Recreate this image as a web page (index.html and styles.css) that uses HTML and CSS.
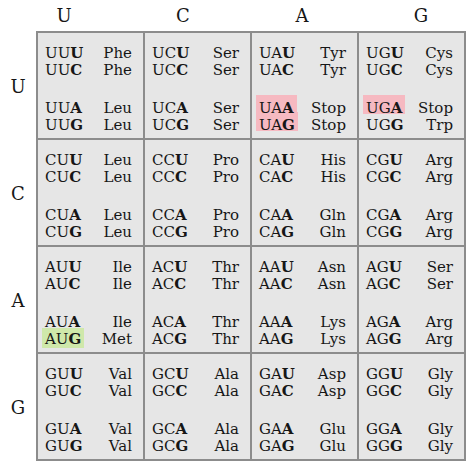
FILE: index.html
```html
<!DOCTYPE html>
<html lang="en">

<head>
    <meta charset="UTF-8">
    <meta name="viewport" content="width=device-width, initial-scale=1.0">
    <title>Codon table</title>
    <link rel="stylesheet" href="styles.css">
</head>

<body>
    <div class="head">
        <div class="head__base">U</div>
        <div class="head__base">C</div>
        <div class="head__base">A</div>
        <div class="head__base">G</div>
    </div>
    <div class="main">
        <div class="labels">
            <div class="labels__base">U</div>
            <div class="labels__base">C</div>
            <div class="labels__base">A</div>
            <div class="labels__base">G</div>
        </div>
        <div class="codons">
            <!-- U row -->
            <div class="cell">
                <div class="pair">
                    <div class="line"><span class="codon">UU<b>U</b></span><span>Phe</span></div>
                    <div class="line"><span class="codon">UU<b>C</b></span><span>Phe</span></div>
                </div>
                <div class="pair">
                    <div class="line"><span class="codon">UU<b>A</b></span><span>Leu</span></div>
                    <div class="line"><span class="codon">UU<b>G</b></span><span>Leu</span></div>
                </div>
            </div>
            <div class="cell">
                <div class="pair">
                    <div class="line"><span class="codon">UC<b>U</b></span><span>Ser</span></div>
                    <div class="line"><span class="codon">UC<b>C</b></span><span>Ser</span></div>
                </div>
                <div class="pair">
                    <div class="line"><span class="codon">UC<b>A</b></span><span>Ser</span></div>
                    <div class="line"><span class="codon">UC<b>G</b></span><span>Ser</span></div>
                </div>
            </div>
            <div class="cell">
                <div class="pair">
                    <div class="line"><span class="codon">UA<b>U</b></span><span>Tyr</span></div>
                    <div class="line"><span class="codon">UA<b>C</b></span><span>Tyr</span></div>
                </div>
                <div class="pair">
                    <div class="line"><span class="codon codon--stop">UA<b>A</b></span><span>Stop</span></div>
                    <div class="line"><span class="codon codon--stop">UA<b>G</b></span><span>Stop</span></div>
                </div>
            </div>
            <div class="cell">
                <div class="pair">
                    <div class="line"><span class="codon">UG<b>U</b></span><span>Cys</span></div>
                    <div class="line"><span class="codon">UG<b>C</b></span><span>Cys</span></div>
                </div>
                <div class="pair">
                    <div class="line"><span class="codon codon--stop">UG<b>A</b></span><span>Stop</span></div>
                    <div class="line"><span class="codon">UG<b>G</b></span><span>Trp</span></div>
                </div>
            </div>

            <!-- C row -->
            <div class="cell">
                <div class="pair">
                    <div class="line"><span class="codon">CU<b>U</b></span><span>Leu</span></div>
                    <div class="line"><span class="codon">CU<b>C</b></span><span>Leu</span></div>
                </div>
                <div class="pair">
                    <div class="line"><span class="codon">CU<b>A</b></span><span>Leu</span></div>
                    <div class="line"><span class="codon">CU<b>G</b></span><span>Leu</span></div>
                </div>
            </div>
            <div class="cell">
                <div class="pair">
                    <div class="line"><span class="codon">CC<b>U</b></span><span>Pro</span></div>
                    <div class="line"><span class="codon">CC<b>C</b></span><span>Pro</span></div>
                </div>
                <div class="pair">
                    <div class="line"><span class="codon">CC<b>A</b></span><span>Pro</span></div>
                    <div class="line"><span class="codon">CC<b>G</b></span><span>Pro</span></div>
                </div>
            </div>
            <div class="cell">
                <div class="pair">
                    <div class="line"><span class="codon">CA<b>U</b></span><span>His</span></div>
                    <div class="line"><span class="codon">CA<b>C</b></span><span>His</span></div>
                </div>
                <div class="pair">
                    <div class="line"><span class="codon">CA<b>A</b></span><span>Gln</span></div>
                    <div class="line"><span class="codon">CA<b>G</b></span><span>Gln</span></div>
                </div>
            </div>
            <div class="cell">
                <div class="pair">
                    <div class="line"><span class="codon">CG<b>U</b></span><span>Arg</span></div>
                    <div class="line"><span class="codon">CG<b>C</b></span><span>Arg</span></div>
                </div>
                <div class="pair">
                    <div class="line"><span class="codon">CG<b>A</b></span><span>Arg</span></div>
                    <div class="line"><span class="codon">CG<b>G</b></span><span>Arg</span></div>
                </div>
            </div>

            <!-- A row -->
            <div class="cell">
                <div class="pair">
                    <div class="line"><span class="codon">AU<b>U</b></span><span>Ile</span></div>
                    <div class="line"><span class="codon">AU<b>C</b></span><span>Ile</span></div>
                </div>
                <div class="pair">
                    <div class="line"><span class="codon">AU<b>A</b></span><span>Ile</span></div>
                    <div class="line"><span class="codon codon--start">AU<b>G</b></span><span>Met</span></div>
                </div>
            </div>
            <div class="cell">
                <div class="pair">
                    <div class="line"><span class="codon">AC<b>U</b></span><span>Thr</span></div>
                    <div class="line"><span class="codon">AC<b>C</b></span><span>Thr</span></div>
                </div>
                <div class="pair">
                    <div class="line"><span class="codon">AC<b>A</b></span><span>Thr</span></div>
                    <div class="line"><span class="codon">AC<b>G</b></span><span>Thr</span></div>
                </div>
            </div>
            <div class="cell">
                <div class="pair">
                    <div class="line"><span class="codon">AA<b>U</b></span><span>Asn</span></div>
                    <div class="line"><span class="codon">AA<b>C</b></span><span>Asn</span></div>
                </div>
                <div class="pair">
                    <div class="line"><span class="codon">AA<b>A</b></span><span>Lys</span></div>
                    <div class="line"><span class="codon">AA<b>G</b></span><span>Lys</span></div>
                </div>
            </div>
            <div class="cell">
                <div class="pair">
                    <div class="line"><span class="codon">AG<b>U</b></span><span>Ser</span></div>
                    <div class="line"><span class="codon">AG<b>C</b></span><span>Ser</span></div>
                </div>
                <div class="pair">
                    <div class="line"><span class="codon">AG<b>A</b></span><span>Arg</span></div>
                    <div class="line"><span class="codon">AG<b>G</b></span><span>Arg</span></div>
                </div>
            </div>

            <!-- G row -->
            <div class="cell">
                <div class="pair">
                    <div class="line"><span class="codon">GU<b>U</b></span><span>Val</span></div>
                    <div class="line"><span class="codon">GU<b>C</b></span><span>Val</span></div>
                </div>
                <div class="pair">
                    <div class="line"><span class="codon">GU<b>A</b></span><span>Val</span></div>
                    <div class="line"><span class="codon">GU<b>G</b></span><span>Val</span></div>
                </div>
            </div>
            <div class="cell">
                <div class="pair">
                    <div class="line"><span class="codon">GC<b>U</b></span><span>Ala</span></div>
                    <div class="line"><span class="codon">GC<b>C</b></span><span>Ala</span></div>
                </div>
                <div class="pair">
                    <div class="line"><span class="codon">GC<b>A</b></span><span>Ala</span></div>
                    <div class="line"><span class="codon">GC<b>G</b></span><span>Ala</span></div>
                </div>
            </div>
            <div class="cell">
                <div class="pair">
                    <div class="line"><span class="codon">GA<b>U</b></span><span>Asp</span></div>
                    <div class="line"><span class="codon">GA<b>C</b></span><span>Asp</span></div>
                </div>
                <div class="pair">
                    <div class="line"><span class="codon">GA<b>A</b></span><span>Glu</span></div>
                    <div class="line"><span class="codon">GA<b>G</b></span><span>Glu</span></div>
                </div>
            </div>
            <div class="cell">
                <div class="pair">
                    <div class="line"><span class="codon">GG<b>U</b></span><span>Gly</span></div>
                    <div class="line"><span class="codon">GG<b>C</b></span><span>Gly</span></div>
                </div>
                <div class="pair">
                    <div class="line"><span class="codon">GG<b>A</b></span><span>Gly</span></div>
                    <div class="line"><span class="codon">GG<b>G</b></span><span>Gly</span></div>
                </div>
            </div>
        </div>
    </div>
</body>

</html>
```

FILE: styles.css
```css
*,
*::after,
*::before {
    padding: 0;
    margin: 0;
    box-sizing: border-box;
}

body {
    background: #fff;
    color: #161616;
    font-family: "DejaVu Serif", serif;
}

.head {
    display: flex;
    gap: 79px;
    height: 31px;
    padding-left: 44px;
}

.head__base {
    width: 40px;
    padding-top: 7px;
    font-size: 18px;
    line-height: 18px;
    text-align: center;
}

.main {
    display: flex;
}

.labels {
    width: 36px;
    display: flex;
    flex-direction: column;
    padding-top: 2px;
}

.labels__base {
    height: 107px;
    display: flex;
    align-items: center;
    justify-content: center;
    font-size: 18px;
}

.codons {
    width: 430px;
    height: 430px;

    display: grid;
    grid-template-columns: repeat(4, minmax(0, 1fr));
    grid-template-rows: repeat(4, minmax(0, 1fr));
    gap: 2px;

    background: #8c8c8c;
    border: 2px solid #8c8c8c;
}

.cell {
    position: relative;
    z-index: 0;
    background: #e6e6e6;
    padding: 12px 11px 0 7px;
    overflow: hidden;
}

.pair {
    margin-bottom: 21px;
}

.pair:last-child {
    margin-bottom: 0;
}

.line {
    display: flex;
    justify-content: space-between;
    font-size: 15px;
    line-height: 17px;
}

.codon {
    display: inline-block;
}

.codon b {
    font-weight: bold;
}

.codon--stop,
.codon--start {
    position: relative;
}

/* highlight sits a bit above the line box, as in the printed table */
.codon--stop::before,
.codon--start::before {
    content: '';
    position: absolute;
    top: -5px;
    bottom: 3px;
    left: -3px;
    right: -3px;
    z-index: -1;
}

.codon--stop::before {
    background: #f6b9c1;
}

.codon--start::before {
    top: -3px;
    bottom: 0;
    background: #cfe8aa;
}
```
